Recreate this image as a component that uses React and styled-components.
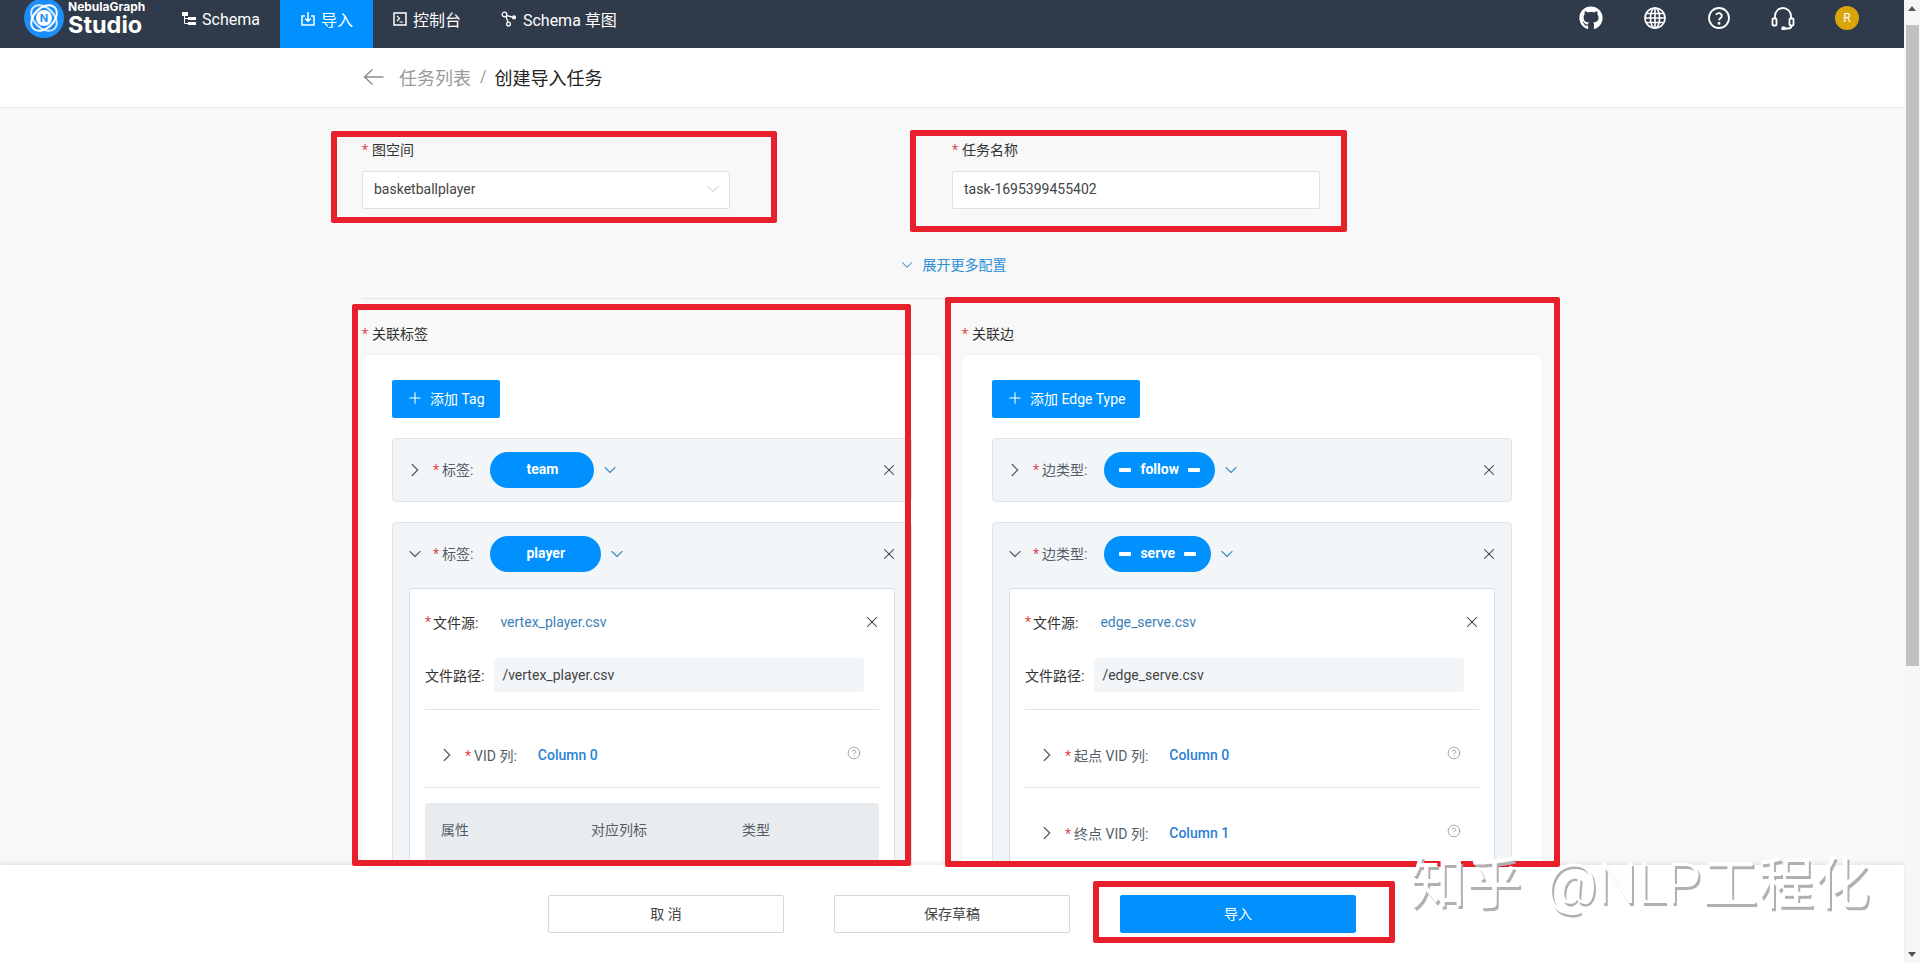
import React from "react";
import styled, { createGlobalStyle } from "styled-components";
import { FaGithub } from "react-icons/fa";
import { ChevronDown, ChevronRight, CircleHelp, Plus, X } from "lucide-react";

const GlobalStyle = createGlobalStyle`
	html, body {
		margin: 0;
		height: 100%;
		overflow: hidden;
		background: #f8f8f8;
		font-family: Roboto, "Noto Sans CJK SC", sans-serif;
		font-size: 14px;
		color: #333;
	}
	* {
		box-sizing: border-box;
	}
`;

const Page = styled.div`
	position: relative;
	display: flex;
	width: 100%;
	height: 963px;
	overflow: hidden;
`;

const Main = styled.div`
	flex: 1;
	min-width: 0;
	display: flex;
	flex-direction: column;
`;

const ScrollTrack = styled.div`
	width: 16px;
	display: flex;
	flex-direction: column;
	align-items: center;
	background: #f7f7f7;
	padding: 6px 0;
`;

const ScrollArrow = styled.div`
	width: 0;
	height: 0;
	border-left: 4px solid transparent;
	border-right: 4px solid transparent;
	${(props) =>
		props.$down
			? "border-top: 5px solid #555; margin-top: auto;"
			: "border-bottom: 5px solid #555;"}
`;

const ScrollThumb = styled.div`
	width: 13px;
	height: 641px;
	margin-top: 14px;
	background: #c1c1c1;
`;

const Nav = styled.header`
	height: 48px;
	flex-shrink: 0;
	display: flex;
	background: #2f3a4a;
	color: #fff;
	overflow: hidden;
	padding-left: 24px;
`;

const Logo = styled.div`
	display: flex;
	gap: 4px;
	width: 138px;
	height: 48px;
	margin-top: -2px;
`;

const LogoText = styled.div`
	display: flex;
	flex-direction: column;
	font-family: Inter, sans-serif;
	font-weight: 700;
	padding-top: 3px;
`;

const LogoTop = styled.span`
	font-size: 12px;
	line-height: 12px;
	white-space: nowrap;
`;

const LogoBottom = styled.span`
	font-size: 23.5px;
	line-height: 24px;
`;

const Tab = styled.div`
	display: flex;
	align-items: center;
	gap: 6px;
	padding: 0 20px 10px ${(props) => (props.$active ? 21 : 20)}px;
	font-size: 16px;
	white-space: nowrap;
	background: ${(props) => (props.$active ? "#0091ff" : "transparent")};
`;

const NavIcons = styled.div`
	margin-left: auto;
	display: flex;
	align-items: center;
	gap: 40px;
	padding: 0 45px 12px 0;
`;

const Avatar = styled.div`
	width: 24px;
	height: 24px;
	border-radius: 50%;
	background: #d9a50b;
	font-size: 12px;
	display: flex;
	align-items: center;
	justify-content: center;
`;

const Breadcrumb = styled.div`
	height: 60px;
	flex-shrink: 0;
	display: flex;
	align-items: center;
	padding: 0 0 2px 363px;
	background: #fff;
	border-bottom: 1px solid #ececec;
	font-size: 18px;
	color: #222;
`;

const BackLink = styled.span`
	color: #999;
	margin-left: 15px;
`;

const Slash = styled.span`
	color: #999;
	margin: 0 8px 0 9px;
	font-size: 16px;
`;

const Content = styled.main`
	flex: 1;
	min-height: 0;
	overflow: hidden;
	padding: 32px 0 0 362px;
`;

const FieldsRow = styled.div`
	display: flex;
	gap: 222px;
`;

const Field = styled.div`
	width: 368px;
`;

const Star = styled.span`
	color: #e5484d;
	margin-right: ${(props) => props.$gap || 3}px;
`;

const FieldLabel = styled.div`
	line-height: 20px;
	margin-bottom: 11px;
`;

const FieldBox = styled.div`
	height: 38px;
	display: flex;
	align-items: center;
	justify-content: space-between;
	padding: 0 6px 2px 11px;
	background: #fff;
	border: 1px solid #e0e0e0;
	border-radius: 2px;
	color: #444;
`;

const Toggle = styled.div`
	width: 1180px;
	display: flex;
	align-items: center;
	justify-content: center;
	gap: 7px;
	margin-top: 46px;
	line-height: 20px;
	color: #2d8fd6;
`;

const Rule = styled.div`
	width: 1180px;
	height: 1px;
	margin-top: 23px;
	background: #e3e3e3;
`;

const Columns = styled.div`
	width: 1180px;
	display: grid;
	grid-template-columns: 580px 580px;
	gap: 20px;
`;

const ColumnLabel = styled.div`
	padding-top: 25px;
	line-height: 20px;
	margin-bottom: 11px;
`;

const Card = styled.section`
	padding: 25px 30px 40px;
	background: #fff;
	border-radius: 6px;
	box-shadow: 0 0 4px rgba(0, 0, 0, 0.04);
`;

const AddButton = styled.div`
	display: inline-flex;
	align-items: center;
	gap: 8px;
	height: 38px;
	padding: 0 15px 2px 16px;
	background: #0091ff;
	color: #fff;
	border-radius: 2px;
	vertical-align: top;
`;

const Item = styled.div`
	margin-top: 20px;
	background: #f3f6f9;
	border: 1px solid #e0e4e9;
	border-radius: 4px;
`;

const ItemHead = styled.div`
	display: flex;
	align-items: center;
	height: 62px;
	padding: 0 15px;
	color: #555d68;
`;

const HeadLabel = styled.span`
	margin-left: 11px;
	margin-right: 17px;
	padding-bottom: 2px;
	white-space: nowrap;
`;

const Pill = styled.div`
	height: 36px;
	display: flex;
	align-items: center;
	gap: 9px;
	padding: 0 ${(props) => (props.$edge ? 15 : 36)}px 2px;
	border-radius: 18px;
	background: #0091ff;
	color: #fff;
	font-weight: 700;
`;

const Dash = styled.span`
	width: 12px;
	height: 4px;
	margin-top: 2px;
	border-radius: 1px;
	background: #fff;
`;

/* keeps the layout width small while the glyph inside overflows evenly */
const IconSlot = styled.span`
	flex-shrink: 0;
	width: ${(props) => props.$size || 14}px;
	height: ${(props) => props.$size || 14}px;
	display: flex;
	align-items: center;
	justify-content: center;
	svg {
		flex-shrink: 0;
	}
`;

const Caret = styled(IconSlot)`
	margin-left: 9px;
	color: #3f8fc4;
`;

const Remove = styled(IconSlot)`
	margin-left: auto;
	color: #333;
`;

const Inner = styled.div`
	margin: 3px 16px 16px 16px;
	padding: 23px 15px 0 15px;
	background: #fff;
	border: 1px solid #d9dee6;
	border-radius: 4px;
`;

const SourceRow = styled.div`
	display: flex;
	align-items: center;
	height: 20px;
	white-space: nowrap;
`;

const SourceLink = styled.span`
	margin-left: 22px;
	color: #3d7fb8;
`;

const PathRow = styled.div`
	display: flex;
	align-items: center;
	gap: 10px;
	margin-top: 26px;
	padding-bottom: 17px;
	border-bottom: 1px solid #dfe2e6;
	white-space: nowrap;
`;

const PathInput = styled.div`
	width: 370px;
	height: 34px;
	display: flex;
	align-items: center;
	padding-left: 8px;
	background: #f3f6f9;
	border-radius: 2px;
	color: #444;
`;

const VidRow = styled.div`
	display: flex;
	align-items: center;
	height: 78px;
	padding: 12px 18px 0 15px;
	border-bottom: 1px solid #dfe2e6;
	color: #555d68;
	white-space: nowrap;
`;

const VidLabel = styled.span`
	margin-left: 11px;
	margin-right: 21px;
`;

const ColumnValue = styled.span`
	color: #2b7fd4;
	font-weight: 500;
`;

const Help = styled.span`
	display: flex;
	margin-left: auto;
	margin-top: -4px;
	color: #8a8f98;
`;

const PropTable = styled.div`
	display: grid;
	grid-template-columns: 150px 151px 1fr;
	align-items: center;
	height: 60px;
	margin-top: 15px;
	padding: 0 0 8px 16px;
	background: #e9ecef;
	border-radius: 4px;
	color: #555d68;
`;

const Footer = styled.footer`
	position: relative;
	height: 98px;
	flex-shrink: 0;
	display: flex;
	justify-content: center;
	gap: 50px;
	padding-top: 30px;
	background: #fff;
	box-shadow: 0 -2px 4px rgba(0, 0, 0, 0.08);
`;

const FootButton = styled.div`
	width: 236px;
	height: 38px;
	display: flex;
	align-items: center;
	justify-content: center;
	padding-bottom: 3px;
	border-radius: 2px;
	border: 1px solid ${(props) => (props.$primary ? "#0091ff" : "#d6d6d6")};
	background: ${(props) => (props.$primary ? "#0091ff" : "#fff")};
	color: ${(props) => (props.$primary ? "#fff" : "#444")};
`;

/* red rectangles drawn over the screenshot */
const Annotation = styled.div`
	position: absolute;
	left: ${(props) => props.$x}px;
	top: ${(props) => props.$y}px;
	width: ${(props) => props.$w}px;
	height: ${(props) => props.$h}px;
	border: 6px solid #e8202c;
	border-radius: 2px;
	pointer-events: none;
`;

const Watermark = styled.div`
	position: absolute;
	left: 1410px;
	top: 844px;
	font-family: Roboto, "Noto Sans CJK SC", sans-serif;
	font-size: 56px;
	line-height: 80px;
	white-space: nowrap;
	color: #fff;
	text-shadow: 2px 3px 0 #b0b0b0;
`;

const WatermarkLatin = styled.span`
	margin: 0 1px 0 24px;
	font-weight: 300;
`;

const annotations = [
	{ x: 331, y: 131, w: 446, h: 92 },
	{ x: 910, y: 130, w: 437, h: 102 },
	{ x: 352, y: 304, w: 559, h: 562 },
	{ x: 945, y: 297, w: 615, h: 570 },
	{ x: 1093, y: 881, w: 302, h: 62 },
];

const LogoMark = () => (
	<svg width="40" height="40" viewBox="0 0 40 40">
		<circle cx="20" cy="20" r="20" fill="#1b8ef8" />
		<ellipse cx="20" cy="20" rx="15" ry="10" fill="none" stroke="#cfe8ff" strokeWidth="2" transform="rotate(45 20 20)" />
		<ellipse cx="20" cy="20" rx="15" ry="10" fill="none" stroke="#fff" strokeWidth="2" transform="rotate(-45 20 20)" />
		<circle cx="20" cy="20" r="8" fill="#fff" />
		<text x="20" y="24" textAnchor="middle" fontSize="11" fontWeight="700" fontFamily="Inter, sans-serif" fill="#1b8ef8">
			N
		</text>
	</svg>
);

const SchemaIcon = () => (
	<svg width="14" height="14" viewBox="0 0 14 14" fill="#fff">
		<rect x="0" y="0" width="6" height="4" />
		<rect x="6" y="5" width="8" height="3" />
		<rect x="6" y="10" width="8" height="3" />
		<path d="M2.5 4v7.5H6M2.5 6.5H6" fill="none" stroke="#fff" />
	</svg>
);

const ImportIcon = () => (
	<svg width="14" height="14" viewBox="0 0 14 14" fill="none" stroke="#fff" strokeWidth="1.5">
		<path d="M4 4H1v9h12V4h-3M7 0v9M4.2 6.5 7 9.3l2.8-2.8" />
	</svg>
);

const ConsoleIcon = () => (
	<svg width="14" height="14" viewBox="0 0 14 14" fill="none" stroke="#fff" strokeWidth="1.5">
		<rect x="1" y="1" width="12" height="12" />
		<path d="M4 4l2.5 2.5L4 9M6.5 10h3.5" strokeWidth="1.2" />
	</svg>
);

const SketchIcon = () => (
	<svg width="16" height="16" viewBox="0 0 16 16" fill="none" stroke="#fff" strokeWidth="1.3">
		<circle cx="3.5" cy="3.5" r="2.3" />
		<circle cx="7.5" cy="13" r="1.9" />
		<path d="M5 5.5l2 5.6M5.8 4.6l5.2 1.4" />
		<circle cx="13" cy="6.4" r="1.4" fill="#fff" />
	</svg>
);

const GlobeIcon = () => (
	<svg width="24" height="24" viewBox="0 0 24 24" fill="none" stroke="#fff" strokeWidth="1.6">
		<circle cx="12" cy="12" r="10" />
		<ellipse cx="12" cy="12" rx="4.6" ry="10" />
		<path d="M12 2v20M2 12h20M3.4 7.5h17.2M3.4 16.5h17.2" />
	</svg>
);

const HelpIcon = () => (
	<svg width="24" height="24" viewBox="0 0 24 24" fill="none" stroke="#fff" strokeWidth="1.8">
		<circle cx="12" cy="12" r="10" />
		<path d="M9 9a3 3 0 0 1 5.8 1c0 2-2.8 2.4-2.8 4.2" />
		<circle cx="12" cy="17.2" r="0.6" fill="#fff" />
	</svg>
);

const HeadsetIcon = () => (
	<svg width="24" height="24" viewBox="0 0 24 24" fill="none" stroke="#fff" strokeWidth="1.8">
		<path d="M4 13v-3a8 8 0 0 1 16 0v3" />
		<rect x="1.5" y="12.5" width="4" height="7" rx="1" />
		<rect x="18.5" y="12.5" width="4" height="7" rx="1" />
		<path d="M20.5 19.5c0 2-1.5 3-3.5 3h-3" />
		<circle cx="12.5" cy="22.4" r="1.3" fill="#fff" />
	</svg>
);

const BackArrow = () => (
	<svg width="21" height="18" viewBox="0 0 21 18" fill="none" stroke="#8c8c8c" strokeWidth="1.4">
		<path d="M20.5 9H1.5M9.5 1.5 1.5 9l8 7.5" />
	</svg>
);

const Chevron = ({ open }) => (
	<IconSlot>
		{open ? (
			<ChevronDown size={20} strokeWidth={1.3} />
		) : (
			<ChevronRight size={22} strokeWidth={1.3} />
		)}
	</IconSlot>
);

const ItemHeader = ({ open, label, edge, children }) => (
	<ItemHead>
		<Chevron open={open} />
		<HeadLabel>
			<Star>*</Star>
			{label}:
		</HeadLabel>
		<Pill $edge={edge}>{children}</Pill>
		<Caret>
			<ChevronDown size={20} strokeWidth={1.3} />
		</Caret>
		<Remove $size={15}>
			<X size={18} strokeWidth={1.4} />
		</Remove>
	</ItemHead>
);

const SourceBlock = ({ file }) => (
	<>
		<SourceRow>
			<Star $gap={2}>*</Star>
			文件源:
			<SourceLink>{file}</SourceLink>
			<Remove $size={15}>
				<X size={18} strokeWidth={1.4} />
			</Remove>
		</SourceRow>
		<PathRow>
			文件路径:
			<PathInput>/{file}</PathInput>
		</PathRow>
	</>
);

const VidField = ({ label, value }) => (
	<VidRow>
		<Chevron />
		<VidLabel>
			<Star>*</Star>
			{label}:
		</VidLabel>
		<ColumnValue>{value}</ColumnValue>
		<Help>
			<CircleHelp size={14} strokeWidth={1.3} />
		</Help>
	</VidRow>
);

const App = () => (
	<Page>
		<GlobalStyle />
		<Main>
			<Nav>
				<Logo>
					<LogoMark />
					<LogoText>
						<LogoTop>NebulaGraph</LogoTop>
						<LogoBottom>Studio</LogoBottom>
					</LogoText>
				</Logo>
				<Tab>
					<SchemaIcon />
					Schema
				</Tab>
				<Tab $active>
					<ImportIcon />
					导入
				</Tab>
				<Tab>
					<ConsoleIcon />
					控制台
				</Tab>
				<Tab>
					<SketchIcon />
					Schema 草图
				</Tab>
				<NavIcons>
					<FaGithub size={24} />
					<GlobeIcon />
					<HelpIcon />
					<HeadsetIcon />
					<Avatar>R</Avatar>
				</NavIcons>
			</Nav>
			<Breadcrumb>
				<BackArrow />
				<BackLink>任务列表</BackLink>
				<Slash>/</Slash>
				创建导入任务
			</Breadcrumb>
			<Content>
				<FieldsRow>
					<Field>
						<FieldLabel>
							<Star $gap={4}>*</Star>图空间
						</FieldLabel>
						<FieldBox>
							basketballplayer
							<ChevronDown size={20} strokeWidth={1.2} color="#c4c4c4" />
						</FieldBox>
					</Field>
					<Field>
						<FieldLabel>
							<Star $gap={4}>*</Star>任务名称
						</FieldLabel>
						<FieldBox>task-1695399455402</FieldBox>
					</Field>
				</FieldsRow>
				<Toggle>
					<ChevronDown size={18} strokeWidth={1.4} />
					展开更多配置
				</Toggle>
				<Rule />
				<Columns>
					<div>
						<ColumnLabel>
							<Star $gap={4}>*</Star>关联标签
						</ColumnLabel>
						<Card>
							<AddButton>
								<IconSlot>
									<Plus size={18} strokeWidth={1.5} />
								</IconSlot>
								添加 Tag
							</AddButton>
							<Item>
								<ItemHeader label="标签">team</ItemHeader>
							</Item>
							<Item>
								<ItemHeader open label="标签">
									player
								</ItemHeader>
								<Inner>
									<SourceBlock file="vertex_player.csv" />
									<VidField label="VID 列" value="Column 0" />
									<PropTable>
										<span>属性</span>
										<span>对应列标</span>
										<span>类型</span>
									</PropTable>
								</Inner>
							</Item>
						</Card>
					</div>
					<div>
						<ColumnLabel>
							<Star $gap={4}>*</Star>关联边
						</ColumnLabel>
						<Card>
							<AddButton>
								<IconSlot>
									<Plus size={18} strokeWidth={1.5} />
								</IconSlot>
								添加 Edge Type
							</AddButton>
							<Item>
								<ItemHeader label="边类型" edge>
									<Dash />
									follow
									<Dash />
								</ItemHeader>
							</Item>
							<Item>
								<ItemHeader open label="边类型" edge>
									<Dash />
									serve
									<Dash />
								</ItemHeader>
								<Inner>
									<SourceBlock file="edge_serve.csv" />
									<VidField label="起点 VID 列" value="Column 0" />
									<VidField label="终点 VID 列" value="Column 1" />
								</Inner>
							</Item>
						</Card>
					</div>
				</Columns>
			</Content>
			<Footer>
				<FootButton>取 消</FootButton>
				<FootButton>保存草稿</FootButton>
				<FootButton $primary>导入</FootButton>
			</Footer>
		</Main>
		<ScrollTrack>
			<ScrollArrow />
			<ScrollThumb />
			<ScrollArrow $down />
		</ScrollTrack>
		{annotations.map((a) => (
			<Annotation key={a.x} $x={a.x} $y={a.y} $w={a.w} $h={a.h} />
		))}
		<Watermark>
			知乎<WatermarkLatin>@NLP</WatermarkLatin>工程化
		</Watermark>
	</Page>
);

export default App;
